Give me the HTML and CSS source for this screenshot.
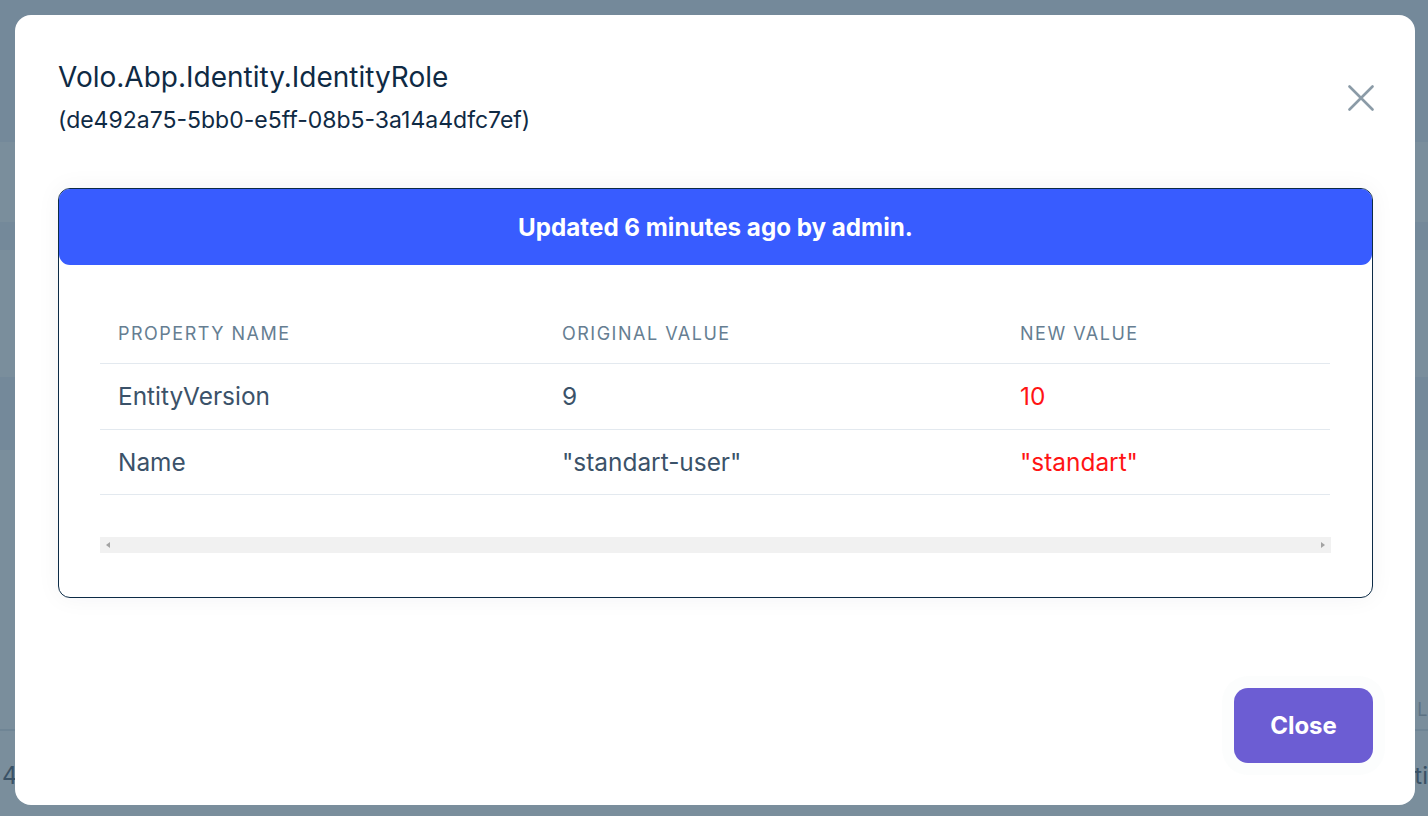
FILE: index.html
```html
<!DOCTYPE html>
<html lang="en">
<head>
<meta charset="utf-8">
<title>Audit log detail</title>
<link rel="stylesheet" href="styles.css">
</head>
<body>
<div class="page">
  <div class="band dark h142"></div>
  <div class="band light h80"></div>
  <div class="band dark h28"></div>
  <div class="band light h127"></div>
  <div class="band dark h73"></div>
  <div class="band light h240"></div>
  <div class="band light h40 bg-row"><span></span><span class="bg-head">RESUL</span></div>
  <div class="band light h86 bg-row bg-last"><span class="bg-text">4</span><span class="bg-text">Entiti</span></div>
</div>

<div class="modal">
  <div class="modal-header">
    <div class="titles">
      <h1 class="title">Volo.Abp.Identity.IdentityRole</h1>
      <div class="subtitle">(de492a75-5bb0-e5ff-08b5-3a14a4dfc7ef)</div>
    </div>
    <button class="close-x" aria-label="Close">
      <svg width="26" height="26" viewBox="0 0 26 26"><path d="M1.5 1.5 L24.5 24.5 M24.5 1.5 L1.5 24.5" stroke="#8b9ba7" stroke-width="2.6" stroke-linecap="round" fill="none"/></svg>
    </button>
  </div>

  <div class="card">
    <div class="card-header">Updated 6 minutes ago by admin.</div>
    <div class="card-body">
      <table class="changes">
        <colgroup><col class="c1"><col class="c2"><col class="c3"></colgroup>
        <thead>
          <tr><th>Property Name</th><th>Original Value</th><th>New Value</th></tr>
        </thead>
        <tbody>
          <tr><td>EntityVersion</td><td>9</td><td class="new">10</td></tr>
          <tr><td>Name</td><td>"standart-user"</td><td class="new">"standart"</td></tr>
        </tbody>
      </table>
      <div class="hscroll">
        <span class="arrow left"></span>
        <span class="arrow right"></span>
      </div>
    </div>
  </div>

  <div class="modal-footer">
    <button class="btn-close">Close</button>
  </div>
</div>
</body>
</html>
```

FILE: styles.css
```css
* { box-sizing: border-box; }
html, body { margin: 0; padding: 0; }
body {
  width: 1428px;
  height: 816px;
  overflow: hidden;
  background: #7a8e9c;
  font-family: Inter, "Noto Sans", sans-serif;
}

.page { display: flex; flex-direction: column; }
.band { width: 100%; }
.dark { background: #74899a; }
.light { background: #7a8e9c; }
.h142 { height: 142px; }
.h80 { height: 80px; }
.h28 { height: 28px; }
.h127 { height: 127px; }
.h73 { height: 73px; }
.h240 { height: 240px; }
.h40 { height: 40px; }
.h86 { height: 86px; }
.bg-row {
  display: flex;
  justify-content: space-between;
  align-items: center;
  padding: 0 0 0 2px;
  border-bottom: 1px solid #6f8595;
}
.bg-last { border-bottom: none; border-top: 1px solid #6f8595; align-items: flex-start; padding-top: 30px; }
.bg-head { font-size: 18px; letter-spacing: 1.5px; color: #5d7384; margin-right: -1px; }
.bg-text { font-size: 24px; color: #3a5266; }

.modal {
  position: fixed;
  left: 15px;
  top: 15px;
  width: 1400px;
  height: 790px;
  background: #fff;
  border-radius: 16px;
  padding: 45px 42px 42px 43px;
  display: flex;
  flex-direction: column;
}

.modal-header {
  display: flex;
  justify-content: space-between;
  align-items: flex-start;
}
.title {
  margin: 0;
  font-size: 28px;
  line-height: 34px;
  font-weight: 400;
  color: #0f2a44;
}
.subtitle {
  margin-top: 11px;
  font-size: 23px;
  line-height: 30px;
  color: #0f2a44;
}
.close-x {
  border: 0;
  background: none;
  padding: 0;
  margin: 25px -1px 0 0;
  width: 26px;
  height: 26px;
  cursor: pointer;
}
.close-x svg { display: block; }

.card {
  margin-top: 53px;
  border: 1px solid #0c2b46;
  border-radius: 12px;
  box-shadow: 0 0 24px rgba(20, 40, 60, 0.05);
}
.card-header {
  height: 76px;
  background: #385cff;
  border-radius: 11px;
  color: #fff;
  font-weight: 700;
  font-size: 24.2px;
  display: flex;
  align-items: center;
  justify-content: center;
}
.card-body {
  padding: 36px 41px 44px 41px;
}

.changes {
  width: 1230px;
  border-collapse: collapse;
  table-layout: fixed;
}
.c1 { width: 444px; }
.c2 { width: 458px; }
.c3 { width: 328px; }
.changes th {
  text-align: left;
  font-weight: 400;
  font-size: 18px;
  line-height: 24px;
  letter-spacing: 1.5px;
  text-transform: uppercase;
  color: #667e92;
  padding: 21px 18px 17px 18px;
  border-bottom: 1px solid #e3e9ef;
}
.changes td {
  font-size: 24.4px;
  line-height: 30px;
  color: #3b5269;
  padding: 17px 18px 18px 18px;
  border-bottom: 1px solid #e3e9ef;
}
.changes tbody tr:last-child td { padding-bottom: 17px; }
.changes td.new { color: #ff1414; }

.hscroll {
  margin-top: 42px;
  height: 16px;
  background: #f1f1f1;
  display: flex;
  justify-content: space-between;
  align-items: center;
  padding: 0 6px;
}
.arrow { width: 0; height: 0; border-top: 3.5px solid transparent; border-bottom: 3.5px solid transparent; }
.arrow.left { border-right: 4px solid #a3a3a3; }
.arrow.right { border-left: 4px solid #a3a3a3; }

.modal-footer {
  margin-top: auto;
  display: flex;
  justify-content: flex-end;
}
.btn-close {
  width: 139px;
  height: 75px;
  border: 0;
  border-radius: 14px;
  background: #6c5dd3;
  color: #fff;
  font-family: Inter, "Noto Sans", sans-serif;
  font-weight: 700;
  font-size: 24px;
  box-shadow: 0 0 0 12px rgba(120, 140, 160, 0.02);
  cursor: pointer;
}
```
